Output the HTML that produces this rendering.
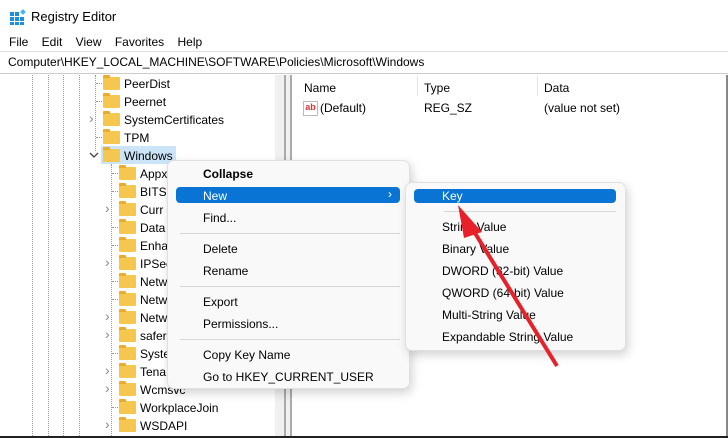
<!DOCTYPE html><html><head><style>
body{margin:0;width:728px;height:438px;overflow:hidden;background:#fff;font-family:"Liberation Sans",sans-serif;font-size:12px;color:#000;position:relative}
.a{position:absolute;white-space:nowrap}
.f{position:absolute;width:17px;height:13px;background:#f6c74f;border-radius:1px}
.f:before{content:"";position:absolute;left:0;top:-2px;width:7px;height:3px;background:#e9ad2c;border-radius:1px 1px 0 0}
.dv{position:absolute;border-left:1px dotted #999;width:0}
.dh{position:absolute;border-top:1px dotted #999;height:0;width:6px}
.ch{position:absolute;color:#888;font-size:14px}
.m{position:absolute;background:#f9f9f9;border:1px solid #e0e0e0;border-radius:7px;box-shadow:2px 4px 10px rgba(0,0,0,.18)}
.sep{position:absolute;height:1px;background:#d6d6d6}
.hl{position:absolute;background:#0a74d4;border-radius:4px}
.mi{top:1px}
</style></head><body>
<svg class="a" style="left:10px;top:9px" width="16" height="16"><rect x="0" y="3" width="4" height="4" fill="#1a8fe0"/><rect x="5" y="3" width="4" height="4" fill="#1a8fe0"/><rect x="0" y="8" width="4" height="4" fill="#1a8fe0"/><rect x="5" y="8" width="4" height="4" fill="#1a8fe0"/><rect x="10" y="8" width="4" height="4" fill="#1a8fe0"/><rect x="0" y="13" width="4" height="3" fill="#1a8fe0"/><rect x="5" y="13" width="4" height="3" fill="#1a8fe0"/><rect x="10" y="13" width="4" height="3" fill="#1a8fe0"/><rect x="11" y="1" width="4" height="4" fill="#4ab0f0" transform="rotate(45 13 3)"/></svg>
<div class="a" style="left:31px;top:9px;font-size:13px">Registry Editor</div>
<div class="a" style="left:9px;top:35px;font-size:12px">File&nbsp;&nbsp;&nbsp;&nbsp;Edit&nbsp;&nbsp;&nbsp;&nbsp;View&nbsp;&nbsp;&nbsp;&nbsp;Favorites&nbsp;&nbsp;&nbsp;&nbsp;Help</div>
<div class="a" style="left:0;top:51px;width:728px;height:21px;border-top:1px solid #ddd;border-bottom:1px solid #ccc"></div>
<div class="a" style="left:8px;top:55px">Computer\HKEY_LOCAL_MACHINE\SOFTWARE\Policies\Microsoft\Windows</div>
<div class="a" style="left:275px;top:75px;width:15px;height:363px;background:#f0f0f0"></div>
<div class="a" style="left:284px;top:75px;width:2px;height:363px;background:#aaa"></div>
<div class="a" style="left:290px;top:75px;width:2px;height:363px;background:#aaa"></div>
<div class="a" style="left:726px;top:75px;width:2px;height:363px;background:#888"></div>
<div class="a" style="left:0;top:436px;width:728px;height:2px;background:#222"></div>
<div class="dv" style="left:32px;top:75px;height:361px"></div>
<div class="dv" style="left:48px;top:75px;height:361px"></div>
<div class="dv" style="left:63px;top:75px;height:361px"></div>
<div class="dv" style="left:79px;top:75px;height:361px"></div>
<div class="dv" style="left:95px;top:75px;height:76px"></div>
<div class="dv" style="left:111px;top:164px;height:272px"></div>
<div class="a" style="left:101px;top:146px;width:75px;height:18px;background:#cce4f7"></div>
<div id="tree"></div>
<script>
var t=document.getElementById('tree'),h='';
function row(x,y,txt,exp){h+=(exp==1?'<div class="ch" style="left:'+(x-14)+'px;top:'+(y-9)+'px">&#x203A;</div>':exp==2?'':'<div class="dh" style="left:'+(x-7)+'px;top:'+y+'px"></div>')+'<div class="f" style="left:'+x+'px;top:'+(y-6)+'px"></div><div class="a" style="left:'+(x+21)+'px;top:'+(y-6)+'px">'+txt+'</div>';}
row(103,83,'PeerDist');row(103,101,'Peernet');row(103,119,'SystemCertificates',1);row(103,137,'TPM');row(103,155,'Windows',2);
var c=[['Appx',0],['BITS',0],['Curr',1],['Data',0],['Enha',0],['IPSec',1],['Netw',0],['Netw',0],['Netw',1],['safer',1],['Syste',0],['Tena',1],['Wcmsvc',1],['WorkplaceJoin',0],['WSDAPI',1]];
c.forEach(function(e,i){row(119,173+18*i,e[0],e[1]);});
t.innerHTML=h;
</script>
<svg class="a" style="left:89px;top:151px" width="10" height="8"><path d="M1 2 L5 6 L9 2" fill="none" stroke="#444" stroke-width="1.3"/></svg>
<div class="a" style="left:304px;top:81px">Name</div>
<div class="a" style="left:417px;top:76px;width:1px;height:20px;background:#e5e5e5"></div>
<div class="a" style="left:424px;top:81px">Type</div>
<div class="a" style="left:537px;top:76px;width:1px;height:20px;background:#e5e5e5"></div>
<div class="a" style="left:544px;top:81px">Data</div>
<div class="a" style="left:303px;top:101px;width:13px;height:13px;border:1px solid #bbb;background:#fff;font-size:9px;color:#d33;font-weight:bold;line-height:11px;text-align:center">ab</div>
<div class="a" style="left:320px;top:101px">(Default)</div>
<div class="a" style="left:424px;top:101px">REG_SZ</div>
<div class="a" style="left:544px;top:101px">(value not set)</div>

<div class="m" style="left:167px;top:160px;width:241px;height:227px"></div>
<div class="hl" style="left:176px;top:187px;width:224px;height:16px"></div>
<div class="a" style="left:203px;top:167px;font-weight:bold">Collapse</div>
<div class="a" style="left:203px;top:189px;color:#fff">New</div>
<div class="a" style="left:388px;top:187px;color:#fff">&#x203A;</div>
<div class="a" style="left:203px;top:211px">Find...</div>
<div class="sep" style="left:180px;top:233px;width:220px"></div>
<div class="a" style="left:203px;top:242px">Delete</div>
<div class="a" style="left:203px;top:264px">Rename</div>
<div class="sep" style="left:180px;top:286px;width:220px"></div>
<div class="a" style="left:203px;top:295px">Export</div>
<div class="a" style="left:203px;top:317px">Permissions...</div>
<div class="sep" style="left:180px;top:339px;width:220px"></div>
<div class="a" style="left:203px;top:348px">Copy Key Name</div>
<div class="a" style="left:203px;top:370px">Go to HKEY_CURRENT_USER</div>

<div class="m" style="left:405px;top:182px;width:219px;height:167px"></div>
<div class="hl" style="left:414px;top:189px;width:202px;height:14px"></div>
<div class="a" style="left:442px;top:189px;color:#fff">Key</div>
<div class="sep" style="left:444px;top:211px;width:172px"></div>
<div class="a" style="left:442px;top:220px">String Value</div>
<div class="a" style="left:442px;top:242px">Binary Value</div>
<div class="a" style="left:442px;top:264px">DWORD (32-bit) Value</div>
<div class="a" style="left:442px;top:286px">QWORD (64-bit) Value</div>
<div class="a" style="left:442px;top:308px">Multi-String Value</div>
<div class="a" style="left:442px;top:330px">Expandable String Value</div>
<svg class="a" style="left:0;top:0" width="728" height="438"><line x1="557" y1="366" x2="470" y2="225" stroke="#e8202a" stroke-width="4"/><polygon points="458,205 482,232 464,238" fill="#e8202a"/></svg>
</body></html>
